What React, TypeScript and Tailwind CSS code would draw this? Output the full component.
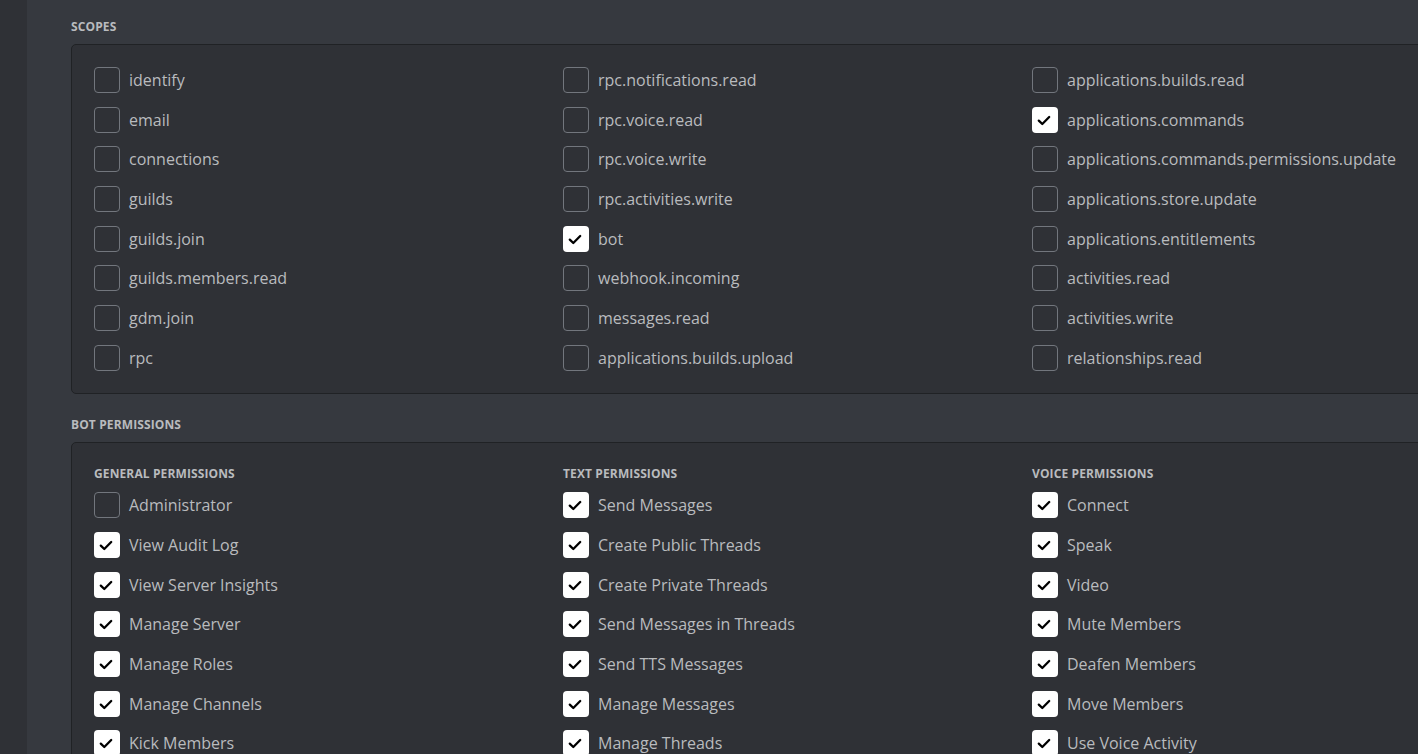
const SCOPES: [string, boolean][][] = [
  [
    ['identify', false],
    ['email', false],
    ['connections', false],
    ['guilds', false],
    ['guilds.join', false],
    ['guilds.members.read', false],
    ['gdm.join', false],
    ['rpc', false],
  ],
  [
    ['rpc.notifications.read', false],
    ['rpc.voice.read', false],
    ['rpc.voice.write', false],
    ['rpc.activities.write', false],
    ['bot', true],
    ['webhook.incoming', false],
    ['messages.read', false],
    ['applications.builds.upload', false],
  ],
  [
    ['applications.builds.read', false],
    ['applications.commands', true],
    ['applications.commands.permissions.update', false],
    ['applications.store.update', false],
    ['applications.entitlements', false],
    ['activities.read', false],
    ['activities.write', false],
    ['relationships.read', false],
  ],
];

const PERMISSIONS: { title: string; items: [string, boolean][] }[] = [
  {
    title: 'General Permissions',
    items: [
      ['Administrator', false],
      ['View Audit Log', true],
      ['View Server Insights', true],
      ['Manage Server', true],
      ['Manage Roles', true],
      ['Manage Channels', true],
      ['Kick Members', true],
    ],
  },
  {
    title: 'Text Permissions',
    items: [
      ['Send Messages', true],
      ['Create Public Threads', true],
      ['Create Private Threads', true],
      ['Send Messages in Threads', true],
      ['Send TTS Messages', true],
      ['Manage Messages', true],
      ['Manage Threads', true],
    ],
  },
  {
    title: 'Voice Permissions',
    items: [
      ['Connect', true],
      ['Speak', true],
      ['Video', true],
      ['Mute Members', true],
      ['Deafen Members', true],
      ['Move Members', true],
      ['Use Voice Activity', true],
    ],
  },
];

function Checkbox({ checked }: { checked: boolean }) {
  if (checked) {
    return (
      <div className="w-[26px] h-[26px] shrink-0 rounded-[4px] bg-white flex items-center justify-center">
        <svg width="26" height="26" viewBox="0 0 26 26" fill="none">
          <path d="M6.8 13.6 L10.3 17 L17.2 10" stroke="#000" strokeWidth="2.3" strokeLinecap="round" strokeLinejoin="round" />
        </svg>
      </div>
    );
  }
  return <div className="w-[26px] h-[26px] shrink-0 rounded-[4px] border border-[#72767d]" />;
}

function Row({ label, checked }: { label: string; checked: boolean }) {
  return (
    <div className="h-[39.7px] flex items-center gap-[9px]">
      <Checkbox checked={checked} />
      <span className="text-[16px] text-[#b9bbbe] whitespace-nowrap">{label}</span>
    </div>
  );
}

function SectionTitle({ children }: { children: string }) {
  return <h2 className="text-[12px] leading-4 font-bold uppercase text-[#b9bbbe] tracking-[0.01em]">{children}</h2>;
}

export default function App() {
  return (
    <div
      className="w-[1418px] h-[754px] overflow-hidden flex bg-[#36393f]"
      style={{ fontFamily: '"Open Sans", "Noto Sans", sans-serif' }}
    >
      <div className="w-[27px] shrink-0 bg-[#2f3136]" />
      <main className="pl-[44px] pt-[19px] shrink-0">
        <SectionTitle>Scopes</SectionTitle>
        <div className="mt-[9px] w-[1460px] rounded-[5px] border border-[#202225] bg-[#2f3136] px-[22px] py-[15px] flex">
          {SCOPES.map((col, i) => (
            <div key={i} className="w-[469px] shrink-0 flex flex-col">
              {col.map(([label, checked]) => (
                <Row key={label} label={label} checked={checked} />
              ))}
            </div>
          ))}
        </div>

        <div className="mt-[23px]">
          <SectionTitle>Bot Permissions</SectionTitle>
        </div>
        <div className="mt-[9px] w-[1460px] rounded-[5px] border border-[#202225] bg-[#2f3136] px-[22px] pt-[23px] pb-[15px] flex">
          {PERMISSIONS.map((group) => (
            <div key={group.title} className="w-[469px] shrink-0 flex flex-col">
              <div className="mb-[4px]">
                <SectionTitle>{group.title}</SectionTitle>
              </div>
              {group.items.map(([label, checked]) => (
                <Row key={label} label={label} checked={checked} />
              ))}
            </div>
          ))}
        </div>
      </main>
    </div>
  );
}
